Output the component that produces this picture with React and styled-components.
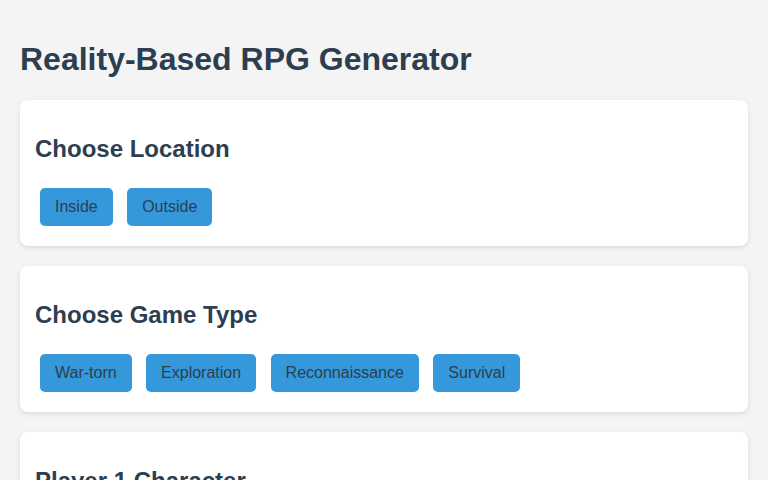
import React, { useState } from 'react';
import styled, { createGlobalStyle } from 'styled-components';

const GlobalStyle = createGlobalStyle`
    body {
        margin: 0;
        padding: 20px;
        background: #f4f4f4;
        font-family: "Liberation Sans", Arial, sans-serif;
        color: #2c3e50;
    }
`;

const Title = styled.h1`
    font-size: 32px;
    margin: 21.44px 0;
    color: #2c3e50;
`;

const Card = styled.section`
    background: #fff;
    border-radius: 8px;
    padding: 15px;
    margin-bottom: 20px;
    box-shadow: 0 2px 5px rgba(0, 0, 0, .1);
`;

const CardTitle = styled.h2`
    font-size: 24px;
    margin: 20px 0;
    color: #2c3e50;
`;

const Options = styled.div`
    font-size: 16px;
`;

const OptionButton = styled.button`
    display: inline-block;
    margin: 5px;
    padding: 10px 15px;
    border: none;
    border-radius: 5px;
    background: ${p => p.$active ? '#2980b9' : '#3498db'};
    color: #2c3e50;
    font-family: inherit;
    font-size: 16px;
    line-height: 18px;
    vertical-align: top;
    cursor: pointer;
`;

const sections = [
    { title: 'Choose Location', options: ['Inside', 'Outside'] },
    { title: 'Choose Game Type', options: ['War-torn', 'Exploration', 'Reconnaissance', 'Survival'] },
    { title: 'Player 1 Character', options: ['Soldier', 'Medic', 'Scout', 'Engineer'] },
];

const Section = ({ title, options }) => {
    const [picked, setPicked] = useState(null);
    return (
        <Card>
            <CardTitle>{title}</CardTitle>
            <Options>
                {options.map(o =>
                    <React.Fragment key={o}>
                        <OptionButton $active={picked === o} onClick={() => setPicked(o)}>{o}</OptionButton>{' '}
                    </React.Fragment>
                )}
            </Options>
        </Card>
    );
};

export default function App() {
    return (
        <>
            <GlobalStyle />
            <Title>Reality-Based RPG Generator</Title>
            {sections.map(s => <Section key={s.title} {...s} />)}
        </>
    );
}
